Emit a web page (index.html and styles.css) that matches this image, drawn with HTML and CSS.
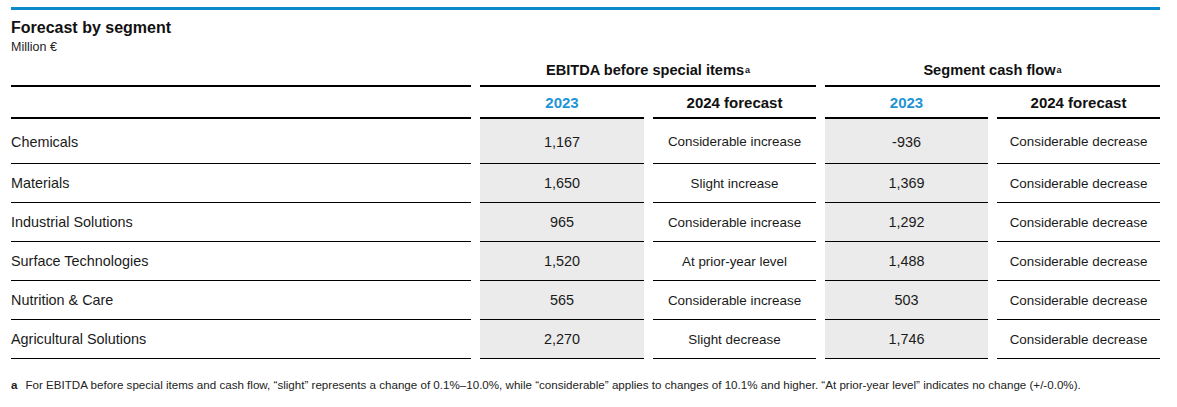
FILE: index.html
```html
<!DOCTYPE html>
<html lang="en">
<head>
<meta charset="utf-8">
<title>Forecast by segment</title>
<link rel="stylesheet" href="styles.css">
</head>
<body>
<div class="page">
  <div class="topline"></div>
  <h1 class="title">Forecast by segment</h1>
  <div class="unit">Million €</div>

  <div class="table">
    <div class="cell group-blank"></div>
    <div class="cell group">EBITDA before special items<sup>a</sup></div>
    <div class="cell group">Segment cash flow<sup>a</sup></div>

    <div class="cell head-blank"></div>
    <div class="cell head year">2023</div>
    <div class="cell head">2024 forecast</div>
    <div class="cell head year">2023</div>
    <div class="cell head">2024 forecast</div>

    <div class="cell label first">Chemicals</div>
    <div class="cell num shade first">1,167</div>
    <div class="cell txt first">Considerable increase</div>
    <div class="cell num shade first">-936</div>
    <div class="cell txt first">Considerable decrease</div>

    <div class="cell label">Materials</div>
    <div class="cell num shade">1,650</div>
    <div class="cell txt">Slight increase</div>
    <div class="cell num shade">1,369</div>
    <div class="cell txt">Considerable decrease</div>

    <div class="cell label">Industrial Solutions</div>
    <div class="cell num shade">965</div>
    <div class="cell txt">Considerable increase</div>
    <div class="cell num shade">1,292</div>
    <div class="cell txt">Considerable decrease</div>

    <div class="cell label">Surface Technologies</div>
    <div class="cell num shade">1,520</div>
    <div class="cell txt">At prior-year level</div>
    <div class="cell num shade">1,488</div>
    <div class="cell txt">Considerable decrease</div>

    <div class="cell label">Nutrition &amp; Care</div>
    <div class="cell num shade">565</div>
    <div class="cell txt">Considerable increase</div>
    <div class="cell num shade">503</div>
    <div class="cell txt">Considerable decrease</div>

    <div class="cell label">Agricultural Solutions</div>
    <div class="cell num shade">2,270</div>
    <div class="cell txt">Slight decrease</div>
    <div class="cell num shade">1,746</div>
    <div class="cell txt">Considerable decrease</div>
  </div>

  <p class="footnote"><b>a</b><span>For EBITDA before special items and cash flow, “slight” represents a change of 0.1%–10.0%, while “considerable” applies to changes of 10.1% and higher. “At prior-year level” indicates no change (+/-0.0%).</span></p>
</div>
</body>
</html>
```

FILE: styles.css
```css
* { box-sizing: border-box; }
html, body { margin: 0; padding: 0; background: #fff; }
body {
  font-family: "Liberation Sans", Arial, Helvetica, sans-serif;
  color: #1a1a1a;
}
.page {
  width: 1149px;
  margin-left: 11px;
  padding-top: 7px;
}
.topline {
  height: 3px;
  background: #0a8acb;
}
.title {
  margin: 9px 0 0;
  font-size: 16px;
  line-height: 18px;
  font-weight: bold;
  color: #111;
}
.unit {
  margin-top: 3px;
  font-size: 12.5px;
  line-height: 14px;
  color: #222;
}
.table {
  margin-top: 2px;
  display: grid;
  grid-template-columns: 460px 164px 163px 163px 163px;
  column-gap: 9px;
}
.cell {
  display: flex;
  align-items: center;
  justify-content: center;
  font-size: 14.4px;
  color: #1a1a1a;
  white-space: nowrap;
}
.group-blank {
  border-bottom: 2px solid #000;
  height: 31px;
}
.group {
  grid-column: span 2;
  border-bottom: 2px solid #000;
  height: 31px;
  font-weight: bold;
  font-size: 14.6px;
  padding-bottom: 1px;
  color: #111;
}
.group sup {
  font-size: 9px;
  line-height: 0;
  vertical-align: 6px;
  margin-left: 1px;
}
.head-blank, .head {
  border-bottom: 2px solid #000;
  height: 32px;
}
.head {
  font-weight: bold;
  font-size: 15px;
  color: #111;
}
.head.year { color: #1f95d6; }
.label, .num, .txt {
  height: 39px;
  border-bottom: 1px solid #000;
}
.first { height: 45px; padding-top: 1px; }
.label {
  justify-content: flex-start;
}
.num { font-size: 14.4px; }
.txt { font-size: 13.4px; }
.shade { background: #ebebeb; }
.footnote {
  margin: 19px 0 0;
  font-size: 11.6px;
  line-height: 13px;
  color: #222;
  display: flex;
  gap: 8px;
}
.footnote b { font-weight: bold; }
```
